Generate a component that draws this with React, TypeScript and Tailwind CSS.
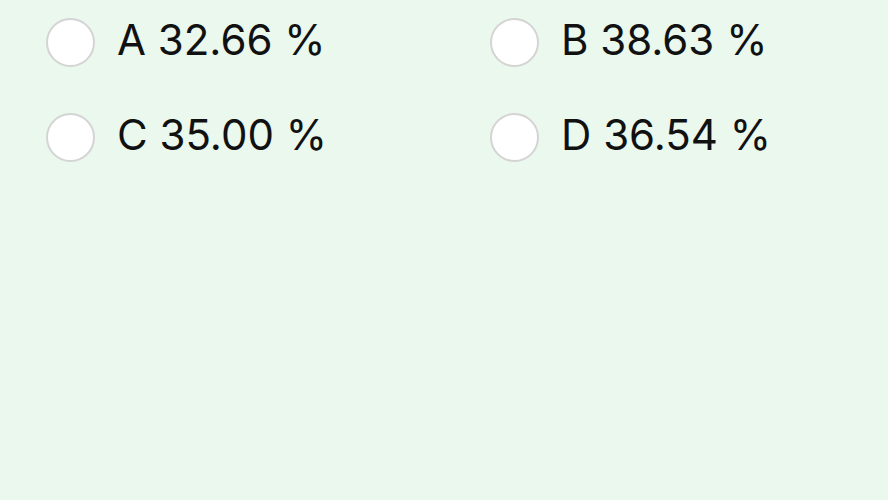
import React from "react";

const options = [
  { key: "A", value: "32.66" },
  { key: "B", value: "38.63" },
  { key: "C", value: "35.00" },
  { key: "D", value: "36.54" },
];

export default function App() {
  return (
    <div
      className="w-[888px] h-[500px] bg-[#eaf8ed] text-[#111111]"
      style={{ fontFamily: "Inter, 'Noto Sans', sans-serif" }}
    >
      <div className="grid grid-cols-2 pt-[18px] gap-y-[46px]">
        {options.map((o) => (
          <label key={o.key} className="flex items-center pl-[46px] h-[49px] cursor-pointer">
            <span className="w-[49px] h-[49px] rounded-full bg-white border-2 border-[#d4d4d4] shrink-0" />
            <span className="ml-[22px] text-[42px] leading-none mb-[5px]">
              {o.key} {o.value} %
            </span>
          </label>
        ))}
      </div>
    </div>
  );
}
